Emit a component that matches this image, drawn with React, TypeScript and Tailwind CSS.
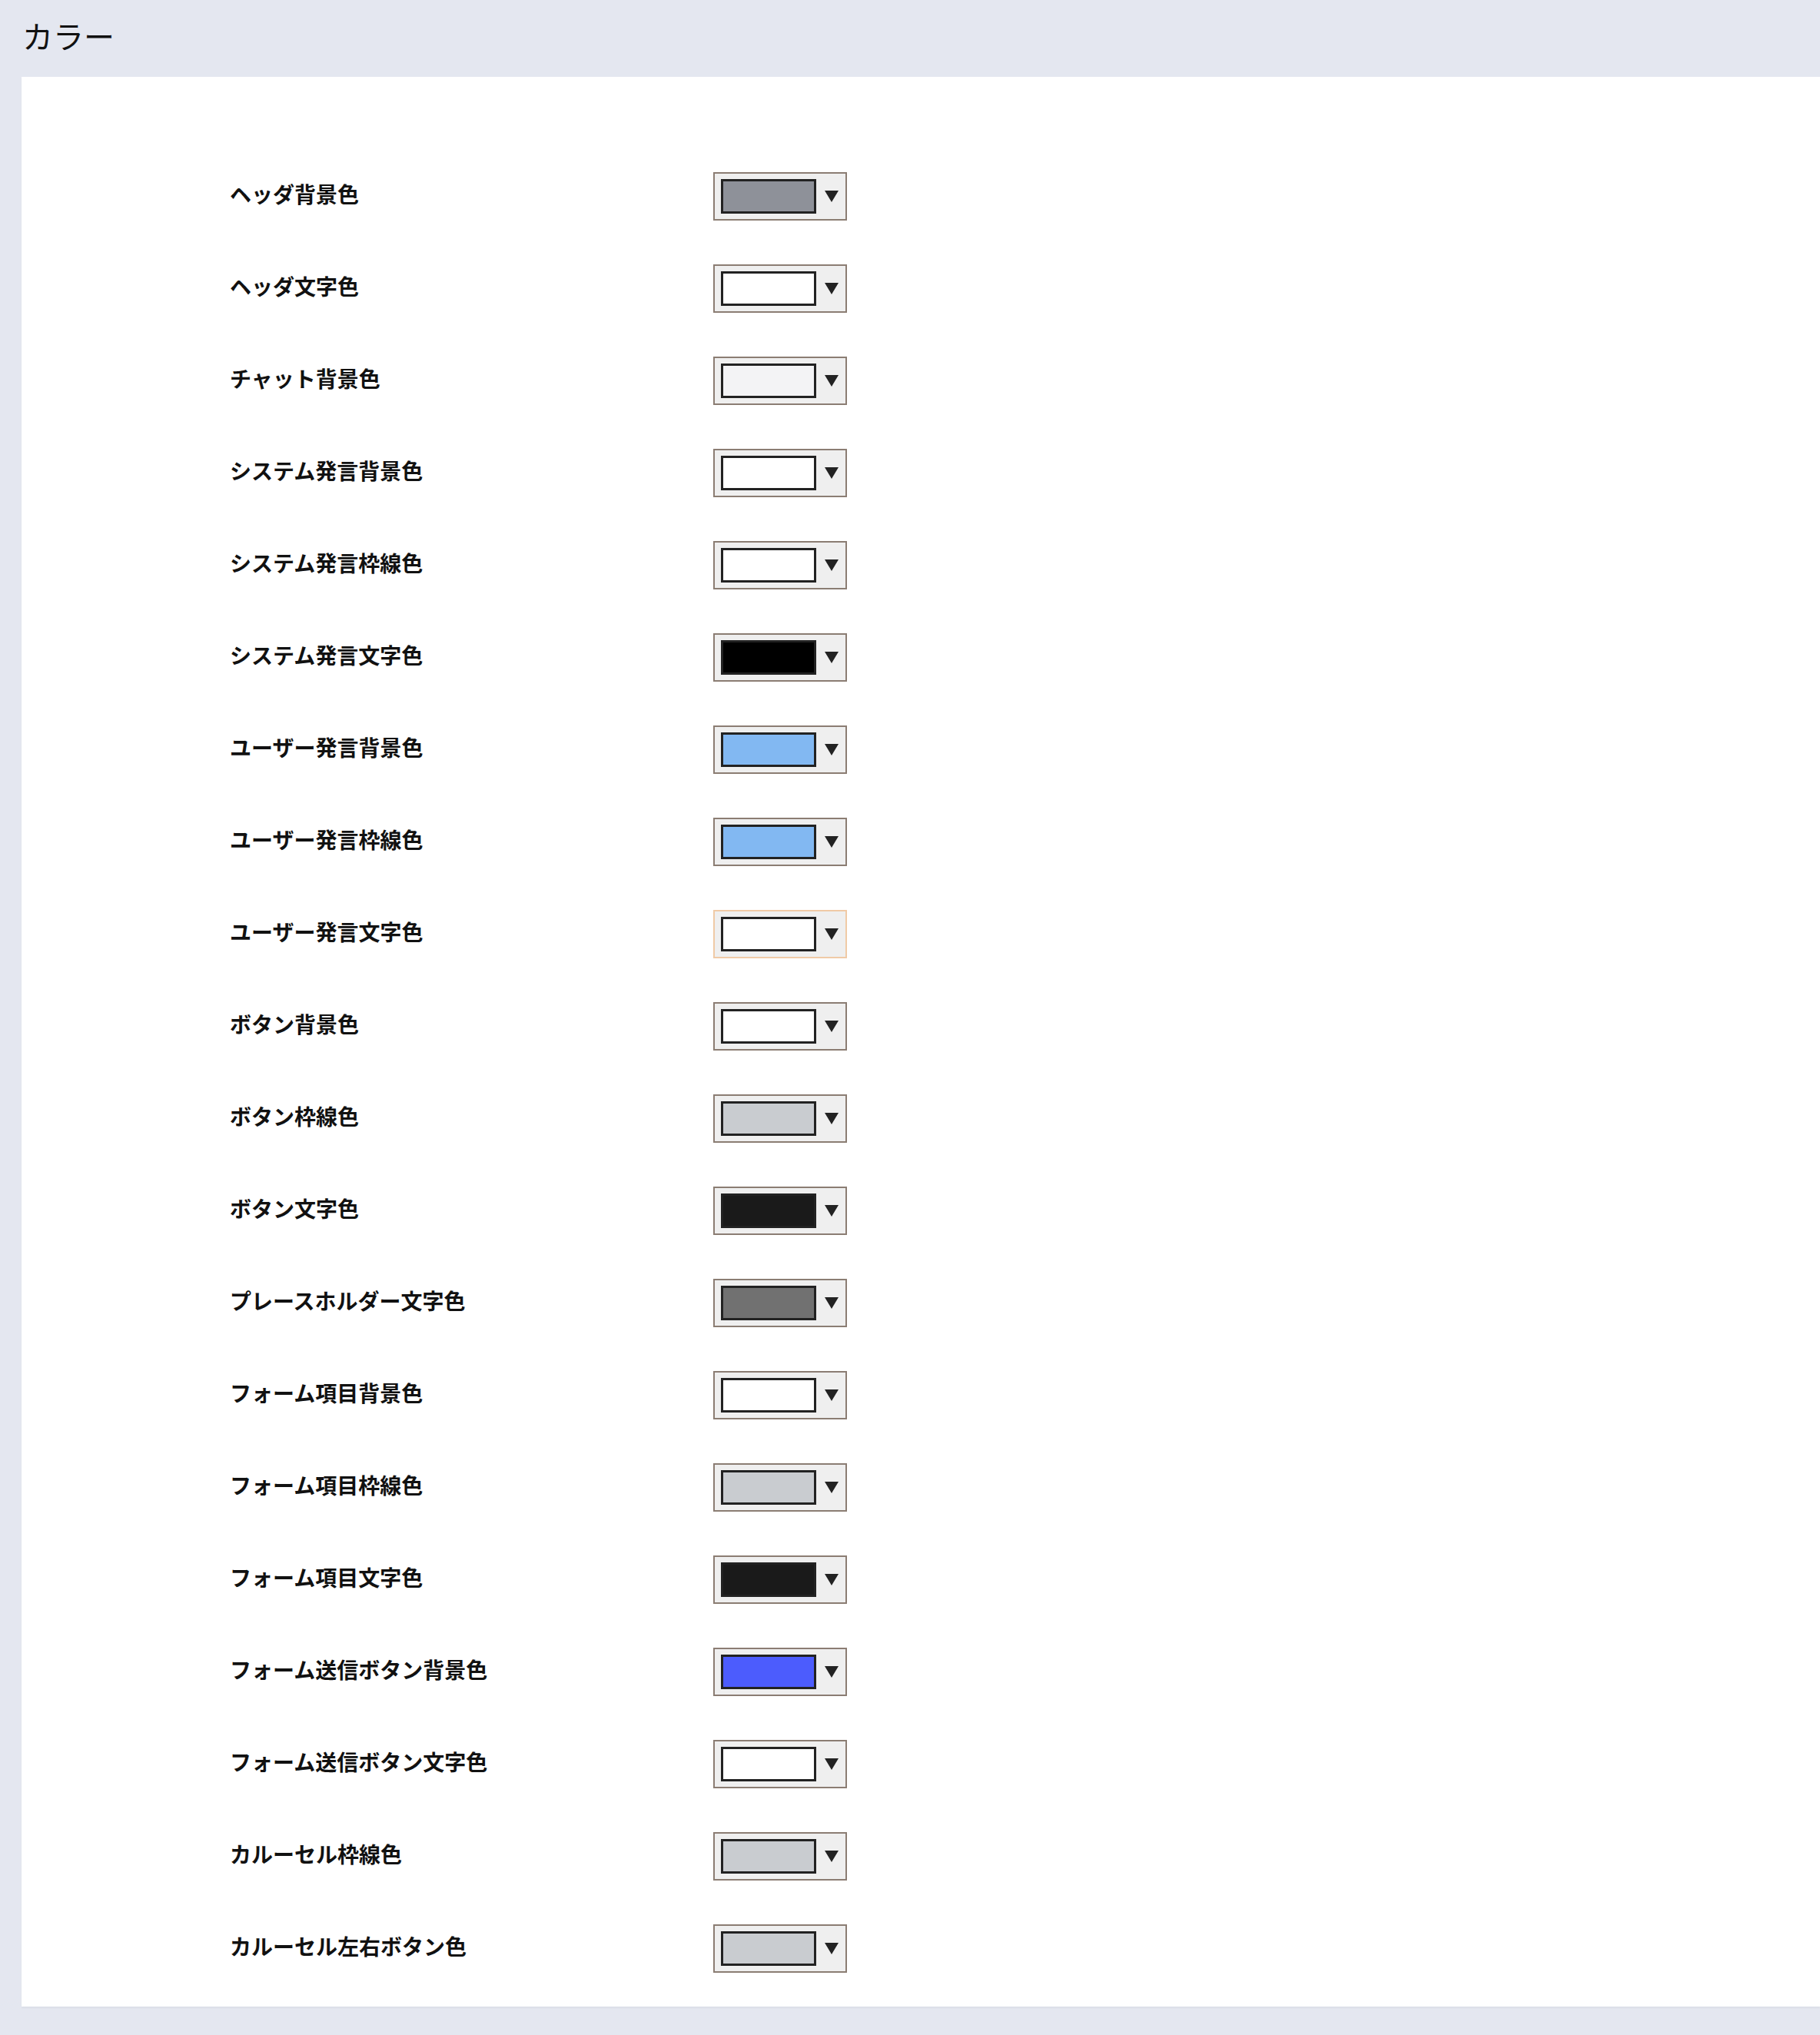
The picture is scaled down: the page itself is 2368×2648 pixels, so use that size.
import React from "react";

type Row = { label: string; color: string; focus?: boolean };

const rows: Row[] = [
  { label: "ヘッダ背景色", color: "#8e9199" },
  { label: "ヘッダ文字色", color: "#ffffff" },
  { label: "チャット背景色", color: "#f3f3f5" },
  { label: "システム発言背景色", color: "#ffffff" },
  { label: "システム発言枠線色", color: "#ffffff" },
  { label: "システム発言文字色", color: "#000000" },
  { label: "ユーザー発言背景色", color: "#82b8f2" },
  { label: "ユーザー発言枠線色", color: "#82b8f2" },
  { label: "ユーザー発言文字色", color: "#ffffff", focus: true },
  { label: "ボタン背景色", color: "#ffffff" },
  { label: "ボタン枠線色", color: "#c9ccd0" },
  { label: "ボタン文字色", color: "#1a1a1a" },
  { label: "プレースホルダー文字色", color: "#717171" },
  { label: "フォーム項目背景色", color: "#ffffff" },
  { label: "フォーム項目枠線色", color: "#c9ccd0" },
  { label: "フォーム項目文字色", color: "#1a1a1a" },
  { label: "フォーム送信ボタン背景色", color: "#4c5cfd" },
  { label: "フォーム送信ボタン文字色", color: "#ffffff" },
  { label: "カルーセル枠線色", color: "#c9ccd0" },
  { label: "カルーセル左右ボタン色", color: "#c9ccd0" },
];

function ColorButton({ color, focus }: { color: string; focus?: boolean }) {
  return (
    <div
      className={
        "flex w-[174px] h-[63px] items-center bg-[#efefef] border-2 pl-[8px] " +
        (focus ? "border-[#f0caa6]" : "border-[#8b7d73]")
      }
    >
      <div
        className="w-[124px] h-[45px] border-[3px] border-[#222222]"
        style={{ backgroundColor: color }}
      />
      <svg className="ml-[11px]" width="18" height="15" viewBox="0 0 18 15">
        <polygon points="0,0 18,0 9,15" fill="#222222" />
      </svg>
    </div>
  );
}

export default function App() {
  return (
    <div
      className="min-h-[2648px] bg-[#e4e7f0] pb-[37px]"
      style={{ fontFamily: '"Noto Sans CJK JP", "Noto Sans", sans-serif' }}
    >
      <div className="h-[100px] flex items-center pl-[29px]">
        <h1 className="text-[40px] font-normal text-[#111111] leading-none mt-[-8px]">カラー</h1>
      </div>
      <div className="ml-[28px] bg-white pt-[95px] pb-[16px] shadow-[0_2px_2px_rgba(0,0,0,0.04)]">
        {rows.map((r) => (
          <div key={r.label} className="flex h-[120px] items-center pl-[271px]">
            <div className="w-[629px] text-[28px] font-bold text-[#111111] leading-none mt-[-6px]">
              {r.label}
            </div>
            <ColorButton color={r.color} focus={r.focus} />
          </div>
        ))}
      </div>
    </div>
  );
}
